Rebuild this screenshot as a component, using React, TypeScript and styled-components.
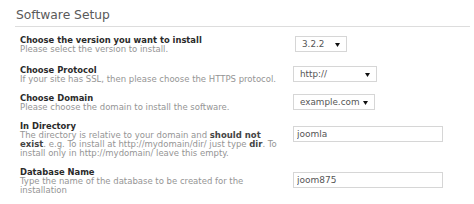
import React from "react";
import styled, { createGlobalStyle } from "styled-components";

const Global = createGlobalStyle`
  html, body { margin: 0; padding: 0; background: #ffffff; }
  body { font-family: "DejaVu Sans", Verdana, sans-serif; }
`;

const Page = styled.div`
  width: 474px;
  height: 204px;
  overflow: hidden;
  padding: 8px 4px 0 15px;
  box-sizing: border-box;
`;

const Title = styled.h2`
  margin: 0;
  padding: 0 0 4px 1px;
  font-size: 12.3px;
  font-weight: normal;
  line-height: 14px;
  color: #5a5a5a;
  border-bottom: 1px solid #dddddd;
`;

const Form = styled.div`
  display: flex;
  flex-direction: column;
  padding: 9px 0 0 5px;
`;

const Row = styled.div<{ $gap: number }>`
  display: flex;
  align-items: flex-start;
  margin-bottom: ${(p) => p.$gap}px;
`;

const Info = styled.div`
  width: 273px;
  flex: none;
`;

const Label = styled.div`
  font-size: 8.4px;
  font-weight: bold;
  line-height: 9px;
  color: #2a2a2a;
  white-space: nowrap;
`;

const Desc = styled.div`
  font-size: 8.5px;
  line-height: 9px;
  color: #959595;
  white-space: nowrap;
  b { color: #444444; }
`;

const Control = styled.div<{ $offset?: number }>`
  padding-left: ${(p) => p.$offset ?? 0}px;
`;

const SelectWrap = styled.div<{ $w: number }>`
  position: relative;
  width: ${(p) => p.$w}px;
  height: 16px;
  box-sizing: border-box;
  border: 1px solid #d6d6d6;
  background: #ffffff;
  display: flex;
  align-items: center;
`;

const NativeSelect = styled.select`
  appearance: none;
  -webkit-appearance: none;
  border: none;
  outline: none;
  background: transparent;
  width: 100%;
  height: 100%;
  padding: 0 0 0 6px;
  margin: 0;
  font-family: "DejaVu Sans", Verdana, sans-serif;
  font-size: 8.8px;
  color: #555555;
`;

const Arrow = styled.svg`
  position: absolute;
  right: 6px;
  top: 6px;
  pointer-events: none;
`;

const TextInput = styled.input`
  width: 150px;
  height: 16px;
  box-sizing: border-box;
  border: 1px solid #d6d6d6;
  padding: 0 0 0 3px;
  margin: 0;
  font-family: "DejaVu Sans", Verdana, sans-serif;
  font-size: 9px;
  color: #555555;
  outline: none;
`;

function Select({ w, value }: { w: number; value: string }) {
  return (
    <SelectWrap $w={w}>
      <NativeSelect defaultValue={value}>
        <option value={value}>{value}</option>
      </NativeSelect>
      <Arrow width="5" height="4" viewBox="0 0 5 4">
        <path d="M0 0 H5 L2.5 4 Z" fill="#111" />
      </Arrow>
    </SelectWrap>
  );
}

export default function App() {
  return (
    <>
      <Global />
      <Page>
        <Title>Software Setup</Title>
        <Form>
          <Row $gap={12}>
            <Info>
              <Label>Choose the version you want to install</Label>
              <Desc>Please select the version to install.</Desc>
            </Info>
            <Control $offset={2}>
              <Select w={52} value="3.2.2" />
            </Control>
          </Row>
          <Row $gap={10}>
            <Info>
              <Label>Choose Protocol</Label>
              <Desc>If your site has SSL, then please choose the HTTPS protocol.</Desc>
            </Info>
            <Control>
              <Select w={84} value="http://" />
            </Control>
          </Row>
          <Row $gap={10}>
            <Info>
              <Label>Choose Domain</Label>
              <Desc>Please choose the domain to install the software.</Desc>
            </Info>
            <Control>
              <Select w={82} value="example.com" />
            </Control>
          </Row>
          <Row $gap={10}>
            <Info>
              <Label>In Directory</Label>
              <Desc>
                The directory is relative to your domain and <b>should not</b>
                <br />
                <b>exist</b>. e.g. To install at http://mydomain/dir/ just type <b>dir</b>. To
                <br />
                install only in http://mydomain/ leave this empty.
              </Desc>
            </Info>
            <Control>
              <TextInput defaultValue="joomla" />
            </Control>
          </Row>
          <Row $gap={0}>
            <Info>
              <Label>Database Name</Label>
              <Desc>
                Type the name of the database to be created for the
                <br />
                installation
              </Desc>
            </Info>
            <Control>
              <TextInput defaultValue="joom875" />
            </Control>
          </Row>
        </Form>
      </Page>
    </>
  );
}
